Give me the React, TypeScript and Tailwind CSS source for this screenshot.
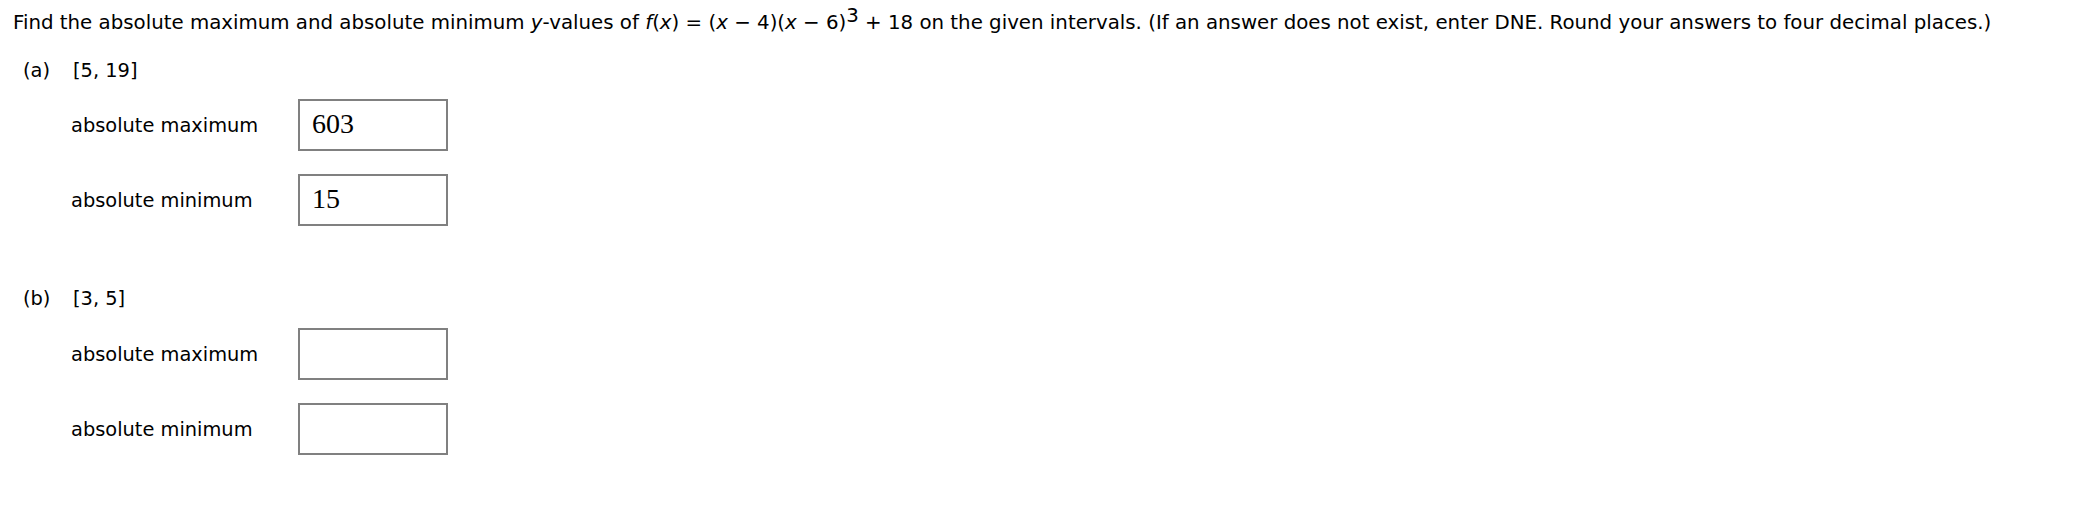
import React from 'react';

const AnswerBox: React.FC<{ value?: string }> = ({ value }) => (
    <div className="w-[150px] h-[52px] border-2 border-[#808080] bg-white flex items-center pl-[12px] pb-[3px]">
        <span className="font-['Liberation_Serif',serif] text-[28px] leading-[28px] text-black">{value}</span>
    </div>
);

const AnswerRow: React.FC<{ label: string; value?: string; className?: string }> = ({ label, value, className }) => (
    <div className={`flex items-center pl-[71px] ${className ?? ''}`}>
        <span className="w-[227px] pt-[2px] leading-[22px] text-[19.4px]">{label}</span>
        <AnswerBox value={value} />
    </div>
);

const PartHeading: React.FC<{ part: string; interval: string; className?: string }> = ({ part, interval, className }) => (
    <div className={`flex pl-[23px] leading-[22px] text-[19.4px] ${className ?? ''}`}>
        <span className="w-[50px]">{part}</span>
        <span>{interval}</span>
    </div>
);

export default function App() {
    return (
        <div className="w-[2094px] h-[512px] bg-white text-black font-['DejaVu_Sans','Verdana',sans-serif] text-[19px] overflow-hidden">
            {/* Question */}
            <p className="pt-[12px] pl-[13px] leading-[22px] h-[34px] whitespace-nowrap text-[19.8px]">
                Find the absolute maximum and absolute minimum <i>y</i>-values of <i>f</i>(<i>x</i>) = (<i>x</i> − 4)(<i>x</i> − 6)<span className="align-[7px] leading-[8px]">3</span> + 18 on the given intervals. (If an answer does not exist, enter DNE. Round your answers to four decimal places.)
            </p>

            {/* Part (a) */}
            <PartHeading part="(a)" interval="[5, 19]" className="mt-[26px]" />
            <AnswerRow label="absolute maximum" value="603" className="mt-[17px]" />
            <AnswerRow label="absolute minimum" value="15" className="mt-[23px]" />

            {/* Part (b) */}
            <PartHeading part="(b)" interval="[3, 5]" className="mt-[62px]" />
            <AnswerRow label="absolute maximum" className="mt-[18px]" />
            <AnswerRow label="absolute minimum" className="mt-[23px]" />
        </div>
    );
}
